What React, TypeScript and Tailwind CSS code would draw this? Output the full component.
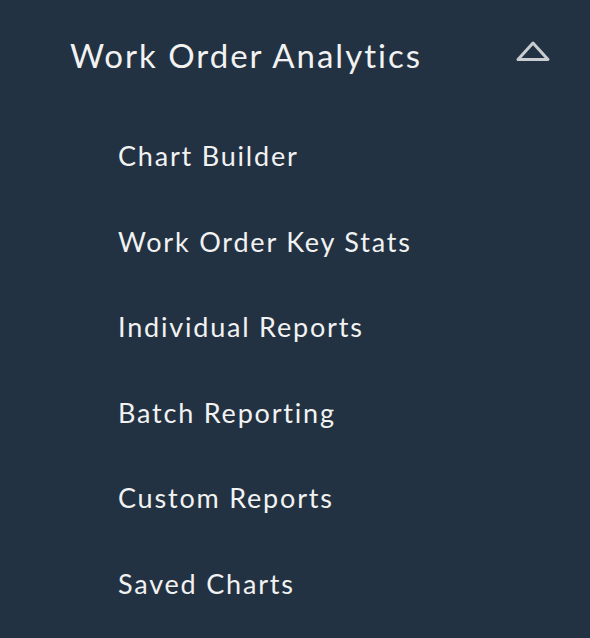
import React from "react";

const items = [
  "Chart Builder",
  "Work Order Key Stats",
  "Individual Reports",
  "Batch Reporting",
  "Custom Reports",
  "Saved Charts",
];

export default function App() {
  return (
    <div
      className="w-[590px] h-[638px] bg-[#223242] text-[#f2f2f2] overflow-hidden"
      style={{ fontFamily: "Lato, 'Noto Sans', sans-serif" }}
    >
      <div className="flex items-center justify-between h-[110px] pl-[70px] pr-[39px]">
        <span className="text-[33px] leading-none tracking-[2px]">Work Order Analytics</span>
        <svg width="36" height="24" viewBox="0 0 36 24" className="mb-[8px]">
          <path
            d="M3 20.5 L18 4 L33 20.5 Z"
            fill="none"
            stroke="#c9ccd0"
            strokeWidth="3"
            strokeLinejoin="round"
          />
        </svg>
      </div>
      <ul className="mt-[3px] pl-[118px]">
        {items.map((t) => (
          <li key={t} className="h-[85.5px] flex items-center text-[27px] leading-none tracking-[1.8px]">
            {t}
          </li>
        ))}
      </ul>
    </div>
  );
}
